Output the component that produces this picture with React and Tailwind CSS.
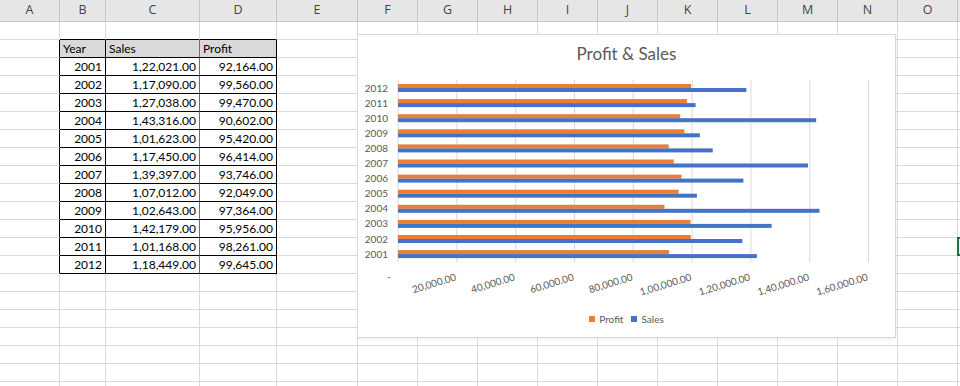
const COLUMNS = [
  ['A', 'w-[60px]'], ['B', 'w-[46px]'], ['C', 'w-[94px]'], ['D', 'w-[77px]'], ['E', 'w-[81px]'],
  ['F', 'w-[60px]'], ['G', 'w-[60px]'], ['H', 'w-[60px]'], ['I', 'w-[60px]'], ['J', 'w-[60px]'],
  ['K', 'w-[60px]'], ['L', 'w-[60px]'], ['M', 'w-[60px]'], ['N', 'w-[60px]'], ['O', 'w-[60px]'], ['P', 'w-[60px]'],
]

const DATA = [
  { year: 2001, sales: 122021, profit: 92164, s: '1,22,021.00', p: '92,164.00' },
  { year: 2002, sales: 117090, profit: 99560, s: '1,17,090.00', p: '99,560.00' },
  { year: 2003, sales: 127038, profit: 99470, s: '1,27,038.00', p: '99,470.00' },
  { year: 2004, sales: 143316, profit: 90602, s: '1,43,316.00', p: '90,602.00' },
  { year: 2005, sales: 101623, profit: 95420, s: '1,01,623.00', p: '95,420.00' },
  { year: 2006, sales: 117450, profit: 96414, s: '1,17,450.00', p: '96,414.00' },
  { year: 2007, sales: 139397, profit: 93746, s: '1,39,397.00', p: '93,746.00' },
  { year: 2008, sales: 107012, profit: 92049, s: '1,07,012.00', p: '92,049.00' },
  { year: 2009, sales: 102643, profit: 97364, s: '1,02,643.00', p: '97,364.00' },
  { year: 2010, sales: 142179, profit: 95956, s: '1,42,179.00', p: '95,956.00' },
  { year: 2011, sales: 101168, profit: 98261, s: '1,01,168.00', p: '98,261.00' },
  { year: 2012, sales: 118449, profit: 99645, s: '1,18,449.00', p: '99,645.00' },
]

const TICKS = ['20,000.00', '40,000.00', '60,000.00', '80,000.00', '1,00,000.00', '1,20,000.00', '1,40,000.00', '1,60,000.00']

const ROWS = Array.from({ length: 21 }, (_, i) => i + 1)

function Cell({ col, row, width }) {
  const tableCol = col === 'B' || col === 'C' || col === 'D'
  const inTable = tableCol && row >= 2 && row <= 14
  const isHead = inTable && row === 2
  const selected = col === 'P' && row === 13

  let right = 'border-r-[#dadada]'
  if (inTable) right = col === 'C' ? 'border-r-[#6f6f6f]' : 'border-r-black'
  else if (col === 'A' && row >= 2 && row <= 14) right = 'border-r-black'

  const bottom = inTable || (tableCol && row === 1) ? 'border-b-black' : 'border-b-[#dadada]'

  let text = ''
  if (isHead) text = { B: 'Year', C: 'Sales', D: 'Profit' }[col]
  else if (inTable) {
    const d = DATA[row - 3]
    text = col === 'B' ? d.year : col === 'C' ? d.s : d.p
  }

  return (
    <div
      className={`relative flex h-[18px] shrink-0 items-center border-r border-b text-[12px] leading-none ${width} ${right} ${bottom} ${
        isHead ? 'justify-start bg-[#d9d9d9] pl-[3px]' : 'justify-end pr-[3px]'
      }`}
    >
      {text}
      {selected && <div className="absolute -top-px -left-px h-[19px] w-[8px] border-2 border-[#217346]" />}
    </div>
  )
}

function Chart() {
  const x0 = 40
  const step = 58.82
  const toX = (v) => x0 + (v * step) / 20000
  const years = [...DATA].reverse()

  return (
    <div className="absolute top-[34px] left-[357px] flex h-[304px] w-[539px] flex-col border border-[#d9d9d9] bg-white font-[Lato,sans-serif] shadow-[0_1px_2px_rgba(0,0,0,0.08)]">
      <div className="flex h-[38px] shrink-0 items-center justify-center text-[17px] text-[#595959]">
        Profit &amp; Sales
      </div>

      <svg width="537" height="232" className="block shrink-0">
        {Array.from({ length: 9 }, (_, k) => (
          <line key={k} x1={x0 + k * step} x2={x0 + k * step} y1="7" y2="189" stroke="#d9d9d9" strokeWidth="1" />
        ))}

        {years.map((d, i) => {
          const b = 15 + i * 15.1
          return (
            <g key={d.year}>
              <rect x={x0} y={b - 4} width={toX(d.profit) - x0} height="4" fill="#ed7d31" />
              <rect x={x0} y={b} width={toX(d.sales) - x0} height="4" fill="#4472c4" />
              <text x="30" y={b - 0.5} textAnchor="end" dominantBaseline="central" fontSize="10" fill="#595959">
                {d.year}
              </text>
            </g>
          )
        })}

        <text x="31" y="207" textAnchor="middle" fontSize="10" fill="#595959">-</text>
        {TICKS.map((t, k) => {
          const gx = x0 + (k + 1) * step
          return (
            <text
              key={t}
              x={gx}
              y="207"
              textAnchor="end"
              fontSize="10"
              fill="#595959"
              transform={`rotate(-17 ${gx} 207)`}
            >
              {t}
            </text>
          )
        })}
      </svg>

      <div className="flex flex-1 items-center justify-center gap-[8px] pb-[4px] text-[10px] text-[#595959]">
        <div className="flex items-center gap-[4px]">
          <span className="h-[6px] w-[6px] bg-[#ed7d31]" />
          Profit
        </div>
        <div className="flex items-center gap-[4px]">
          <span className="h-[6px] w-[6px] bg-[#4472c4]" />
          Sales
        </div>
      </div>
    </div>
  )
}

export default function App() {
  return (
    <div className="relative h-[386px] w-[960px] overflow-hidden bg-white font-[Lato,sans-serif] text-black">
      {/* column headers */}
      <div className="flex h-[22px] border-b border-[#c8c8c8] bg-[#e6e6e6]">
        {COLUMNS.map(([c, w]) => (
          <div
            key={c}
            className={`flex shrink-0 items-center justify-center border-r border-[#c6c6c6] font-['Open_Sans',sans-serif] text-[12.5px] text-[#444] ${w}`}
          >
            {c === 'P' ? '' : c}
          </div>
        ))}
      </div>

      {/* sheet grid */}
      {ROWS.map((r) => (
        <div key={r} className="flex">
          {COLUMNS.map(([c, w]) => (
            <Cell key={c} col={c} row={r} width={w} />
          ))}
        </div>
      ))}

      <Chart />
    </div>
  )
}
